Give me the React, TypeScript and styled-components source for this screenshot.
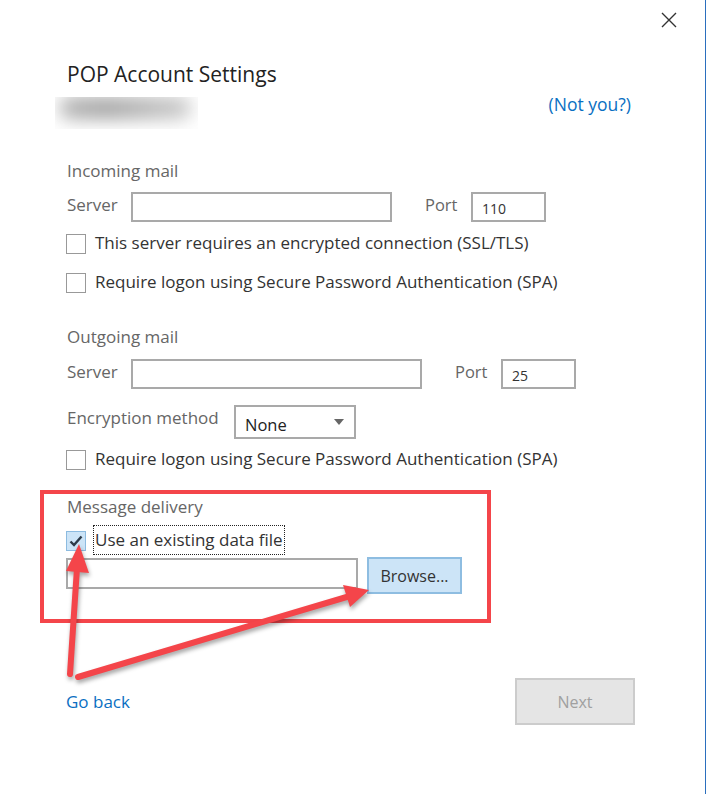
import React from "react";
import styled, { createGlobalStyle } from "styled-components";

const GlobalStyle = createGlobalStyle`
  html, body {
    margin: 0;
    padding: 0;
    background: #ffffff;
  }
  body {
    font-family: "Open Sans", "Noto Sans", sans-serif;
    color: #333333;
  }
`;

const Dialog = styled.div`
  position: relative;
  width: 706px;
  height: 794px;
  box-sizing: border-box;
  border-right: 1px solid #2b6fbe;
  background: #ffffff;
  display: flex;
  flex-direction: column;
`;

const TopBar = styled.div`
  height: 40px;
  display: flex;
  justify-content: flex-end;
  align-items: center;
  padding-right: 24px;
`;

const CloseButton = styled.button`
  width: 24px;
  height: 24px;
  padding: 0;
  border: none;
  background: transparent;
  display: flex;
  align-items: center;
  justify-content: center;
`;

const Body = styled.div`
  padding: 0 70px 0 67px;
  display: flex;
  flex-direction: column;
`;

const Title = styled.h1`
  margin: 20px 0 0;
  height: 28px;
  line-height: 28px;
  font-size: 21px;
  font-weight: 400;
  color: #222222;
`;

const AccountRow = styled.div`
  margin-top: 5px;
  height: 32px;
  display: flex;
  justify-content: space-between;
  align-items: flex-start;
`;

const Blurred = styled.div`
  position: relative;
  margin-left: -12px;
  margin-top: 4px;
  width: 143px;
  height: 32px;
  overflow: hidden;
  &::before {
    content: "";
    position: absolute;
    left: 4px;
    right: 6px;
    top: 0px;
    height: 22px;
    border-radius: 11px;
    background: linear-gradient(90deg, #b4b4b4 0%, #a2a2a2 35%, #b8b8b8 70%, #cbcbcb 100%);
    filter: blur(9px);
  }
`;

const Link = styled.a<{ $size?: number }>`
  color: #0a6fc2;
  font-size: ${(p) => p.$size ?? 17}px;
  text-decoration: none;
  line-height: 22px;
`;

const SectionLabel = styled.div<{ $top: number }>`
  margin-top: ${(p) => p.$top}px;
  height: 22px;
  line-height: 22px;
  font-size: 17px;
  color: #666666;
`;

const FieldRow = styled.div<{ $top: number; $h?: number }>`
  margin-top: ${(p) => p.$top}px;
  height: ${(p) => p.$h ?? 30}px;
  display: flex;
  align-items: center;
`;

const FieldLabel = styled.span<{ $w: number; $lift?: number }>`
  width: ${(p) => p.$w}px;
  flex: 0 0 auto;
  font-size: 17px;
  white-space: nowrap;
  color: #666666;
  margin-bottom: ${(p) => p.$lift ?? 6}px;
`;

const TextBox = styled.div<{ $w: number }>`
  width: ${(p) => p.$w}px;
  height: 30px;
  box-sizing: border-box;
  border: 2px solid #a9a9a9;
  background: #ffffff;
  display: flex;
  align-items: center;
  padding: 2px 0 0 9px;
  font-size: 14px;
  color: #333333;
  flex: 0 0 auto;
`;

const PortLabel = styled.span<{ $gap: number }>`
  margin-left: ${(p) => p.$gap}px;
  width: 46px;
  font-size: 16.5px;
  color: #666666;
  margin-bottom: 6px;
`;

const Select = styled.div`
  margin-left: 16px;
  width: 122px;
  height: 34px;
  flex: 0 0 auto;
  box-sizing: border-box;
  border: 2px solid #a9a9a9;
  display: flex;
  align-items: center;
  justify-content: space-between;
  padding: 4px 10px 0 9px;
  font-size: 16.5px;
  color: #222222;
`;

const Caret = styled.span`
  width: 0;
  height: 0;
  margin-top: -4px;
  border-left: 5px solid transparent;
  border-right: 5px solid transparent;
  border-top: 6px solid #666666;
`;

const CheckRow = styled.label<{ $top: number }>`
  margin-top: ${(p) => p.$top}px;
  height: 30px;
  display: flex;
  align-items: center;
  font-size: 17px;
  color: #333333;
`;

const Box = styled.span<{ $checked?: boolean }>`
  width: 20px;
  height: 20px;
  margin-left: -1px;
  box-sizing: border-box;
  border: 1px solid ${(p) => (p.$checked ? "#8cbbe0" : "#999999")};
  background: ${(p) => (p.$checked ? "#cce4f7" : "#ffffff")};
  display: flex;
  align-items: center;
  justify-content: center;
  flex: 0 0 auto;
`;

const CheckText = styled.span<{ $focus?: boolean }>`
  margin-left: ${(p) => (p.$focus ? 7 : 9)}px;
  padding: ${(p) => (p.$focus ? "2px 1px" : "0")};
  border: ${(p) => (p.$focus ? "1px dotted #222222" : "none")};
  line-height: 24px;
  margin-bottom: 2px;
`;

const FileRow = styled.div`
  margin-top: 1px;
  display: flex;
  align-items: flex-start;
  margin-left: -1px;
`;

const FileBox = styled(TextBox)`
  margin-top: 1px;
  height: 31px;
`;

const BrowseButton = styled.button`
  margin-left: 9px;
  width: 95px;
  height: 37px;
  box-sizing: border-box;
  border: 2px solid #8ebde1;
  background: #cce4f7;
  font-family: inherit;
  font-size: 16px;
  color: #333333;
  padding: 0;
`;

const Footer = styled.div`
  margin-top: auto;
  margin-bottom: 69px;
  display: flex;
  justify-content: space-between;
  align-items: center;
  padding: 0 70px 0 66px;
`;

const NextButton = styled.button`
  width: 120px;
  height: 47px;
  box-sizing: border-box;
  border: 2px solid #cccccc;
  background: #e5e5e5;
  color: #a0a0a0;
  font-family: inherit;
  font-size: 16px;
  padding: 0;
`;

const Annotations = styled.svg`
  position: absolute;
  left: 0;
  top: 0;
  width: 706px;
  height: 794px;
  pointer-events: none;
  overflow: visible;
`;

const ArrowGroup = styled.g`
  filter: drop-shadow(1px 3px 2px rgba(0, 0, 0, 0.35));
`;

export default function App() {
  return (
    <>
      <GlobalStyle />
      <Dialog>
        <TopBar>
          <CloseButton aria-label="Close">
            <svg width="16" height="16" viewBox="0 0 16 16">
              <path d="M1 1 L15 15 M15 1 L1 15" stroke="#333" strokeWidth="1.4" fill="none" />
            </svg>
          </CloseButton>
        </TopBar>
        <Body>
          <Title>POP Account Settings</Title>
          <AccountRow>
            <Blurred />
            <Link href="#" $size={17.5} style={{ marginRight: 4 }}>(Not you?)</Link>
          </AccountRow>
          <SectionLabel $top={35}>Incoming mail</SectionLabel>
          <FieldRow $top={10}>
            <FieldLabel $w={64}>Server</FieldLabel>
            <TextBox $w={261} />
            <PortLabel $gap={33}>Port</PortLabel>
            <TextBox $w={75}>110</TextBox>
          </FieldRow>
          <CheckRow $top={7}>
            <Box />
            <CheckText>This server requires an encrypted connection (SSL/TLS)</CheckText>
          </CheckRow>
          <CheckRow $top={9}>
            <Box />
            <CheckText>Require logon using Secure Password Authentication (SPA)</CheckText>
          </CheckRow>
          <SectionLabel $top={28}>Outgoing mail</SectionLabel>
          <FieldRow $top={11}>
            <FieldLabel $w={64}>Server</FieldLabel>
            <TextBox $w={291} />
            <PortLabel $gap={33}>Port</PortLabel>
            <TextBox $w={75}>25</TextBox>
          </FieldRow>
          <FieldRow $top={16} $h={34}>
            <FieldLabel $w={151} $lift={10}>Encryption method</FieldLabel>
            <Select>
              None
              <Caret />
            </Select>
          </FieldRow>
          <CheckRow $top={6}>
            <Box />
            <CheckText>Require logon using Secure Password Authentication (SPA)</CheckText>
          </CheckRow>
          <SectionLabel $top={21}>Message delivery</SectionLabel>
          <CheckRow $top={8}>
            <Box $checked>
              <svg width="14" height="12" viewBox="0 0 14 12">
                <path d="M1.5 6.5 L5 10 L12.5 1.5" stroke="#2d3a48" strokeWidth="2.4" fill="none" />
              </svg>
            </Box>
            <CheckText $focus>Use an existing data file</CheckText>
          </CheckRow>
          <FileRow>
            <FileBox $w={292} />
            <BrowseButton>Browse...</BrowseButton>
          </FileRow>
        </Body>
        <Footer>
          <Link href="#">Go back</Link>
          <NextButton disabled>Next</NextButton>
        </Footer>
        <Annotations viewBox="0 0 706 794">
          <rect x="42" y="492" width="447" height="129" fill="none" stroke="#f4454a" strokeWidth="4" />
          <ArrowGroup>
            <line x1="70" y1="674" x2="77" y2="568" stroke="#f4454a" strokeWidth="6" strokeLinecap="round" />
            <polygon points="79,544 89,573 66,571" fill="#f4454a" />
            <line x1="78" y1="677" x2="350" y2="596" stroke="#f4454a" strokeWidth="6" strokeLinecap="round" />
            <polygon points="369,590 350,607 343,585" fill="#f4454a" />
          </ArrowGroup>
        </Annotations>
      </Dialog>
    </>
  );
}
